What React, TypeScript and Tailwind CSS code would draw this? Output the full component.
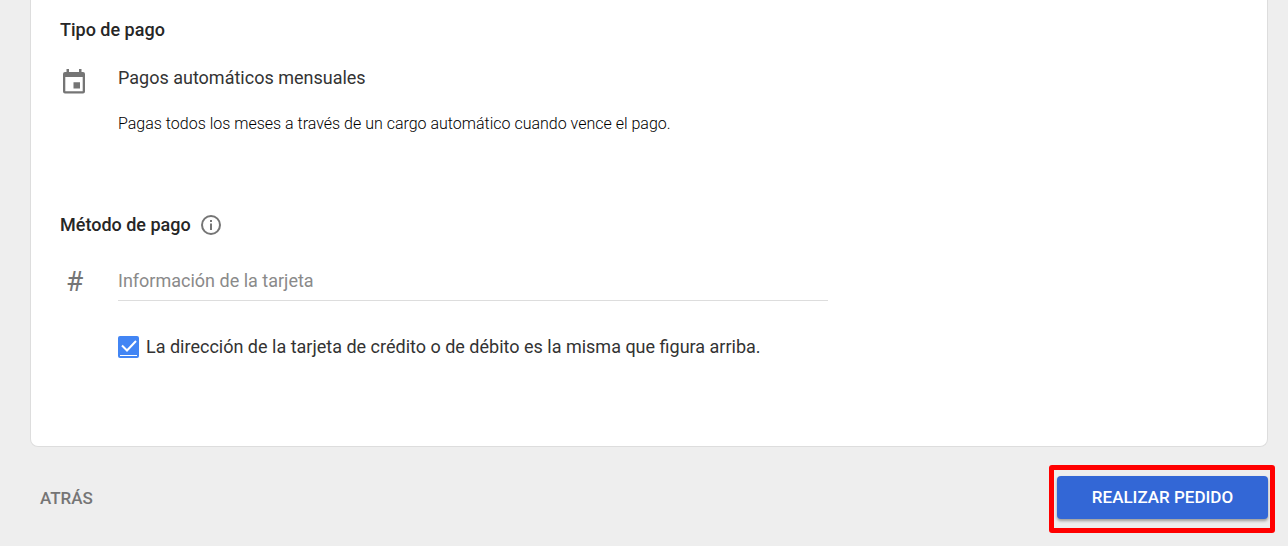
import { useState } from "react"

const CalendarIcon = () => (
  <svg width="24" height="26" viewBox="0 0 24 26" className="shrink-0" aria-hidden="true">
    <path
      fill="#757575"
      fillRule="evenodd"
      d="M4.500 1H7v3h10V1h2.500v3H21a2 2 0 0 1 2 2v17.500a2 2 0 0 1-2 2H3a2 2 0 0 1-2-2V6a2 2 0 0 1 2-2h1.500zM3.300 9v14.200h17.400V9zM11.500 14.200H18v6.300h-6.500z"
    />
  </svg>
)

const InfoIcon = () => (
  <svg width="20" height="20" viewBox="0 0 20 20" aria-hidden="true">
    <circle cx="10" cy="10" r="9" fill="none" stroke="#757575" strokeWidth="2" />
    <path fill="#757575" d="M9 5h2v2H9zM9 8.500h2V15H9z" />
  </svg>
)

const App = () => {
  const [card, setCard] = useState("")
  const [sameAddress, setSameAddress] = useState(true)

  return (
    <div className="min-h-screen bg-[#eeeeee] pr-5 pl-[30px] font-['Roboto',sans-serif] text-[#333333]">
      <main className="rounded-b-lg border-x border-b border-[#dddddd] bg-white px-[29px] pt-[18px] pb-[87px]">
        {/* Payment type */}
        <section>
          <h2 className="text-lg leading-6 font-medium text-[#262626]">Tipo de pago</h2>
          <div className="mt-6 flex gap-8">
            <div className="flex w-[26px] shrink-0 justify-end pt-[2px]">
              <CalendarIcon />
            </div>
            <div>
              <p className="text-lg leading-6">Pagos automáticos mensuales</p>
              <p className="mt-[22px] text-base leading-6 font-light text-black">
                Pagas todos los meses a través de un cargo automático cuando vence el pago.
              </p>
            </div>
          </div>
        </section>

        {/* Payment method */}
        <section className="mt-[77px]">
          <div className="flex items-center gap-2.5">
            <h2 className="text-lg leading-6 font-medium text-[#262626]">Método de pago</h2>
            <button type="button" aria-label="Más información">
              <InfoIcon />
            </button>
          </div>

          <div className="mt-6 flex items-center gap-8">
            <span className="w-[26px] shrink-0 pt-[2px] pl-[6px] text-[28px] leading-[38px] text-[#757575]">#</span>
            <input
              type="text"
              aria-label="Información de la tarjeta"
              placeholder="Información de la tarjeta"
              value={card}
              onChange={(e) => setCard(e.target.value)}
              className="h-10 w-full max-w-[710px] border-b border-[#dddddd] text-lg outline-none placeholder:text-[#8a8a8a]"
            />
          </div>

          <label className="mt-[34px] ml-[58px] flex items-center gap-[7px] text-lg leading-6">
            <span className="relative flex h-[22px] w-[21px] shrink-0">
              <input
                type="checkbox"
                checked={sameAddress}
                onChange={(e) => setSameAddress(e.target.checked)}
                className="peer size-full appearance-none rounded-[2px] border-2 border-[#757575] checked:border-0 checked:bg-[#4285f4]"
              />
              <svg
                viewBox="0 0 21 22"
                className="pointer-events-none absolute inset-0 hidden peer-checked:block"
                aria-hidden="true"
              >
                <path d="M4 9.500l5 5L18 5" fill="none" stroke="#fff" strokeWidth="2" />
                <path d="M2 19.500h17" stroke="#fff" />
              </svg>
            </span>
            La dirección de la tarjeta de crédito o de débito es la misma que figura arriba.
          </label>
        </section>
      </main>

      <footer className="-mr-[7px] flex items-center justify-between pt-[18px] pb-3 pl-[10px]">
        <button type="button" className="text-[17px] font-medium text-[#757575]">
          ATRÁS
        </button>
        <div className="rounded-[3px] border-5 border-[#ff0000] pt-[6px] pr-[2px] pb-[9px] pl-[3px]">
          <button
            type="button"
            className="block h-[43px] w-[211px] rounded bg-[#3367d6] text-[17px] font-medium text-white shadow-[0_2px_3px_rgba(0,0,0,0.35)]"
          >
            REALIZAR PEDIDO
          </button>
        </div>
      </footer>
    </div>
  )
}

export default App
